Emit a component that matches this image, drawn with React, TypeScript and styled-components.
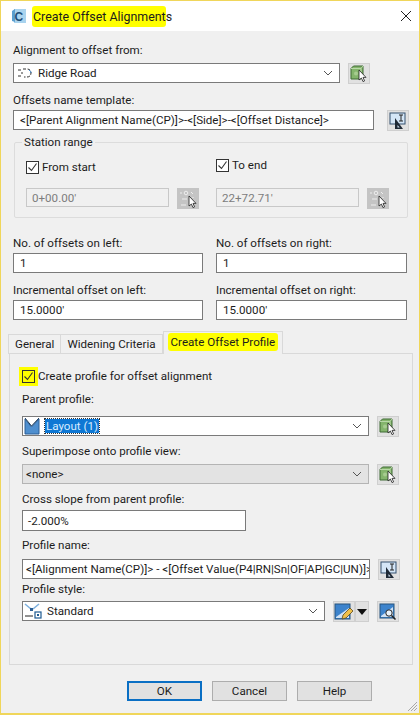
import styled, { createGlobalStyle } from 'styled-components';

const GlobalStyle = createGlobalStyle`
  html, body {
    margin: 0;
    padding: 0;
    background: #f0f0f0;
  }
  * {
    box-sizing: border-box;
  }
`;

const Window = styled.div`
  width: 420px;
  height: 715px;
  display: flex;
  flex-direction: column;
  position: relative;
  background: #f0f0f0;
  border: 1px solid #f0d65a;
  border-bottom-width: 2px;
  font-family: 'Roboto', 'Noto Sans', sans-serif;
  font-size: 11.6px;
  color: #1c1c1c;
  overflow: hidden;
`;

const TitleBar = styled.div`
  height: 30px;
  flex: none;
  background: #fff;
  display: flex;
  align-items: center;
  padding: 0 0 0 11px;
  gap: 6px;
  font-size: 12.4px;
`;

const TitleText = styled.span`
  background: #ffff00;
  padding: 3px 1px;
  border-radius: 3px;
  width: 134px;
  white-space: nowrap;
`;

const CloseButton = styled.div`
  margin-left: auto;
  margin-right: 7px;
  width: 12px;
  height: 12px;
  display: flex;
`;

const Body = styled.div`
  flex: 1;
  padding: 12px 11px 0 12px;
  display: flex;
  flex-direction: column;
`;

const Label = styled.div<{ $top?: number }>`
  height: 15px;
  line-height: 15px;
  margin-top: ${(p) => p.$top ?? 0}px;
  white-space: nowrap;
`;

const Row = styled.div<{ $top?: number; $gap?: number }>`
  display: flex;
  align-items: flex-start;
  gap: ${(p) => p.$gap ?? 8}px;
  margin-top: ${(p) => p.$top ?? 0}px;
`;

const Box = styled.div<{ $width: number; $height?: number; $disabled?: boolean; $muted?: boolean; $pad?: number }>`
  width: ${(p) => p.$width}px;
  height: ${(p) => p.$height ?? 20}px;
  flex: none;
  display: flex;
  align-items: center;
  gap: 5px;
  padding: 0 3px 0 ${(p) => p.$pad ?? 5}px;
  white-space: nowrap;
  overflow: hidden;
  background: ${(p) => (p.$muted ? '#f0f0f0' : p.$disabled ? '#e3e3e3' : '#fff')};
  border: 1px solid ${(p) => (p.$muted ? '#c8c8c8' : p.$disabled ? '#b4b4b4' : '#7a7a7a')};
  color: ${(p) => (p.$muted ? '#7d7d7d' : '#1c1c1c')};
`;

const BoxText = styled.span`
  flex: 1;
`;

const SelectedText = styled.span`
  background: #0f78d4;
  color: #d8ecff;
  outline: 1px dotted #333;
  padding: 0 1px;
  line-height: 14px;
`;

const IconButton = styled.div<{ $width?: number; $disabled?: boolean }>`
  width: ${(p) => p.$width ?? 22}px;
  height: 21px;
  flex: none;
  display: flex;
  align-items: center;
  justify-content: center;
  background: ${(p) => (p.$disabled ? '#c4c4c4' : '#e1e1e1')};
  border: 1px solid ${(p) => (p.$disabled ? '#c4c4c4' : '#cfcfcf')};
`;

const Group = styled.fieldset`
  margin: 5px 0 0 1px;
  padding: 0;
  width: 394px;
  height: 82px;
  border: 1px solid #dcdcdc;
  border-radius: 2px;
  position: relative;
  display: flex;
`;

const Legend = styled.legend`
  margin-left: 7px;
  padding: 0 2px;
  line-height: 13px;
`;

const GroupColumn = styled.div<{ $top: number }>`
  width: 190px;
  padding: ${(p) => p.$top}px 0 0 11px;
`;

const CheckRow = styled.div`
  display: flex;
  align-items: center;
  gap: 3px;
  height: 14px;
`;

const CheckBox = styled.div<{ $marked?: boolean }>`
  width: 13px;
  height: 13px;
  flex: none;
  background: ${(p) => (p.$marked ? '#ffff00' : '#fff')};
  border: 1px solid #333;
  box-shadow: ${(p) => (p.$marked ? '0 0 0 3px #ffff00' : 'none')};
  display: flex;
`;

const FieldColumn = styled.div`
  flex: none;
  width: 203px;
`;

const FieldBox = styled(Box)`
  margin-top: 2px;
`;

const Tabs = styled.div`
  display: flex;
  align-items: flex-end;
  margin: 11px 0 0 -4px;
  height: 23px;
  position: relative;
  z-index: 1;
`;

const Tab = styled.div<{ $active?: boolean }>`
  height: ${(p) => (p.$active ? 23 : 20)}px;
  display: flex;
  align-items: center;
  padding: 0 ${(p) => (p.$active ? 7 : 6)}px;
  background: #f0f0f0;
  border: 1px solid #d9d9d9;
  border-bottom: ${(p) => (p.$active ? 'none' : '1px solid #d9d9d9')};
  margin-left: ${(p) => (p.$active ? 0 : -1)}px;
`;

const TabMark = styled.span`
  background: #ffff00;
  padding: 2px 3px;
  margin: -2px -3px 0;
  border-radius: 3px;
  white-space: nowrap;
`;

const Panel = styled.div`
  margin: -1px 0 0 -4px;
  width: 404px;
  height: 312px;
  border: 1px solid #d9d9d9;
  padding: 15px 0 0 12px;
  display: flex;
  flex-direction: column;
`;

const Footer = styled.div`
  display: flex;
  gap: 10px;
  margin: 16px 0 0 114px;
`;

const DialogButton = styled.div<{ $primary?: boolean }>`
  width: 75px;
  height: 20px;
  display: flex;
  align-items: center;
  justify-content: center;
  background: #e1e1e1;
  border: ${(p) => (p.$primary ? '2px solid #0a6fc4' : '1px solid #adadad')};
`;

const Grip = styled.div`
  position: absolute;
  right: 1px;
  bottom: 1px;
  width: 11px;
  height: 11px;
  display: flex;
`;

const Chevron = () => (
  <svg width="10" height="6" viewBox="0 0 10 6" style={{ flex: 'none', marginRight: 3 }}>
    <path d="M1 1l4 4 4-4" fill="none" stroke="#555" strokeWidth="1" />
  </svg>
);

const Arrow = ({ x, y }: { x: number; y: number }) => (
  <path
    transform={`translate(${x} ${y})`}
    d="M0 0v10l2.4-2 1.6 3.6 1.6-.7-1.6-3.5h3z"
    fill="#fff"
    stroke="#222"
    strokeWidth=".8"
  />
);

const PickFromDrawingIcon = () => (
  <svg width="18" height="18" viewBox="0 0 18 18">
    <path d="M1 3.5L3.5 1H13v10.5L11 14H1z" fill="#84b56c" stroke="#3f6b34" />
    <path d="M1 3.5h10V14M11 3.5L13 1" fill="none" stroke="#b9d8a8" />
    <circle cx="6" cy="8.5" r="2" fill="#a6cc8f" />
    <Arrow x={9} y={5} />
  </svg>
);

const TemplateIcon = () => (
  <svg width="18" height="18" viewBox="0 0 18 18">
    <rect x="1" y="1" width="15" height="11" fill="#d4e6f7" stroke="#34506e" />
    <path d="M10 3h4M12 3v6M10 9h4" stroke="#222" fill="none" />
    <path d="M6 6l8 11H6z" fill="#1f2a36" />
    <path d="M8.5 13l2.2 2.4H8.5z" fill="#d4e6f7" />
  </svg>
);

const StationIcon = () => (
  <svg width="18" height="18" viewBox="0 0 18 18">
    <circle cx="7" cy="3" r="1.8" fill="none" stroke="#eee" />
    <path d="M12 2l2 2M1 3h2M3 9h5M14 7v1" stroke="#eee" fill="none" />
    <path d="M2 15h5" stroke="#eee" />
    <Arrow x={10} y={6} />
  </svg>
);

const AlignmentIcon = () => (
  <svg width="16" height="12" viewBox="0 0 16 12" style={{ flex: 'none' }}>
    <path
      d="M1 3h3M6 2h4c3 0 4 2 4 4s-1 4-4 4H7M1 9h3M4 6h2"
      fill="none"
      stroke="#333"
      strokeDasharray="3 1.5"
    />
    <path d="M12 3c1.5 1 2 2 2 3" stroke="#2b7cc7" fill="none" />
  </svg>
);

const LayoutProfileIcon = () => (
  <svg width="16" height="18" viewBox="0 0 16 18" style={{ flex: 'none' }}>
    <path d="M1 2l6.5 8L15 2v15H1z" fill="#4f8fcf" stroke="#2c5f96" />
    <path d="M1 1l6.5 8L15 1" fill="none" stroke="#1f3d5c" />
  </svg>
);

const StyleIcon = () => (
  <svg width="18" height="16" viewBox="0 0 18 16" style={{ flex: 'none' }}>
    <path d="M1 1l6 5M15 1L9 6" stroke="#7fb1de" strokeWidth="1.6" fill="none" />
    <rect x="6" y="5" width="3" height="3" fill="#2c5f96" />
    <path d="M1 13h8" stroke="#222" />
    <rect x="11" y="9" width="6" height="6" fill="#fff" stroke="#1f5b92" strokeWidth="1.2" />
    <rect x="13" y="11" width="2" height="2" fill="#1f5b92" />
  </svg>
);

const EditStyleIcon = () => (
  <svg width="20" height="18" viewBox="0 0 20 18">
    <rect x="1" y="1" width="15" height="15" fill="#3c83cc" stroke="#27557f" />
    <path d="M2 14l13-9v10H2z" fill="#cfe2f5" />
    <path d="M8 16l1-4 7-7 3 3-7 7z" fill="#efc04a" stroke="#5c4a20" strokeWidth=".8" />
  </svg>
);

const BrowseStyleIcon = () => (
  <svg width="18" height="18" viewBox="0 0 18 18">
    <rect x="1" y="1" width="14" height="14" fill="#3c83cc" stroke="#27557f" />
    <path d="M2 13l12-9v10H2z" fill="#cfe2f5" />
    <circle cx="10" cy="10" r="3.2" fill="#e8f2fb" stroke="#222" />
    <path d="M12.5 12.5l4 4" stroke="#222" strokeWidth="1.6" />
  </svg>
);

const CheckMark = () => (
  <svg width="11" height="11" viewBox="0 0 11 11">
    <path d="M1.5 5.5l3 3 5-7" fill="none" stroke="#333" strokeWidth="1.1" />
  </svg>
);

// the "C" of the title bar is the app's logo letter, kept as real text
const AppLogo = () => (
  <svg width="14" height="16" viewBox="0 0 14 16">
    <path d="M2 1h12v14H2z" fill="#a9d3ee" />
    <path d="M0 3l3-2v13l-3-1z" fill="#5a9fd0" />
    <text x="2.5" y="12.5" fontFamily="Liberation Sans" fontSize="12" fontWeight="700" fill="#1f4f78">
      C
    </text>
  </svg>
);

export default function App() {
  return (
    <>
      <GlobalStyle />
      <Window>
        <TitleBar>
          <AppLogo />
          <TitleText>Create Offset Alignments</TitleText>
          <CloseButton>
            <svg width="12" height="12" viewBox="0 0 12 12">
              <path d="M1 1l10 10M11 1L1 11" stroke="#222" />
            </svg>
          </CloseButton>
        </TitleBar>
        <Body>
          <Label>Alignment to offset from:</Label>
          <Row $top={5}>
            <Box $width={327} $pad={3}>
              <AlignmentIcon />
              <BoxText>Ridge Road</BoxText>
              <Chevron />
            </Box>
            <IconButton>
              <PickFromDrawingIcon />
            </IconButton>
          </Row>
          <Label $top={9}>Offsets name template:</Label>
          <Row $top={2} $gap={13}>
            <Box $width={361} $pad={6}>
              <BoxText>&lt;[Parent Alignment Name(CP)]&gt;-&lt;[Side]&gt;-&lt;[Offset Distance]&gt;</BoxText>
            </Box>
            <IconButton>
              <TemplateIcon />
            </IconButton>
          </Row>
          <Group>
            <Legend>Station range</Legend>
            <GroupColumn $top={11}>
              <CheckRow>
                <CheckBox>
                  <CheckMark />
                </CheckBox>
                From start
              </CheckRow>
              <Row $top={14}>
                <Box $width={143} $height={19} $muted>
                  0+00.00'
                </Box>
                <IconButton $disabled>
                  <StationIcon />
                </IconButton>
              </Row>
            </GroupColumn>
            <GroupColumn $top={9}>
              <CheckRow>
                <CheckBox>
                  <CheckMark />
                </CheckBox>
                To end
              </CheckRow>
              <Row $top={16}>
                <Box $width={143} $height={19} $muted>
                  22+72.71'
                </Box>
                <IconButton $disabled>
                  <StationIcon />
                </IconButton>
              </Row>
            </GroupColumn>
          </Group>
          <Row $top={18} $gap={0}>
            <FieldColumn>
              <Label>No. of offsets on left:</Label>
              <FieldBox $width={190} $pad={6}>
                1
              </FieldBox>
            </FieldColumn>
            <FieldColumn>
              <Label>No. of offsets on right:</Label>
              <FieldBox $width={191} $pad={6}>
                1
              </FieldBox>
            </FieldColumn>
          </Row>
          <Row $top={10} $gap={0}>
            <FieldColumn>
              <Label>Incremental offset on left:</Label>
              <FieldBox $width={190} $pad={6}>
                15.0000'
              </FieldBox>
            </FieldColumn>
            <FieldColumn>
              <Label>Incremental offset on right:</Label>
              <FieldBox $width={191} $pad={6}>
                15.0000'
              </FieldBox>
            </FieldColumn>
          </Row>
          <Tabs>
            <Tab>General</Tab>
            <Tab>Widening Criteria</Tab>
            <Tab $active>
              <TabMark>Create Offset Profile</TabMark>
            </Tab>
          </Tabs>
          <Panel>
            <CheckRow>
              <CheckBox $marked>
                <CheckMark />
              </CheckBox>
              Create profile for offset alignment
            </CheckRow>
            <Label $top={9}>Parent profile:</Label>
            <Row $top={9}>
              <Box $width={347} $pad={1}>
                <LayoutProfileIcon />
                <BoxText>
                  <SelectedText>Layout (1)</SelectedText>
                </BoxText>
                <Chevron />
              </Box>
              <IconButton>
                <PickFromDrawingIcon />
              </IconButton>
            </Row>
            <Label $top={7}>Superimpose onto profile view:</Label>
            <Row $top={5}>
              <Box $width={347} $disabled $pad={3}>
                <BoxText>&lt;none&gt;</BoxText>
                <Chevron />
              </Box>
              <IconButton>
                <PickFromDrawingIcon />
              </IconButton>
            </Row>
            <Label $top={7}>Cross slope from parent profile:</Label>
            <Row $top={3}>
              <Box $width={224} $height={21}>
                -2.000%
              </Box>
            </Row>
            <Label $top={7}>Profile name:</Label>
            <Row $top={6}>
              <Box $width={348} $pad={3}>
                <BoxText>&lt;[Alignment Name(CP)]&gt; - &lt;[Offset Value(P4|RN|Sn|OF|AP|GC|UN)]&gt;</BoxText>
              </Box>
              <IconButton>
                <TemplateIcon />
              </IconButton>
            </Row>
            <Label $top={2}>Profile style:</Label>
            <Row $top={4}>
              <Box $width={303} $pad={1}>
                <StyleIcon />
                <BoxText>Standard</BoxText>
                <Chevron />
              </Box>
              <Row $gap={0}>
                <IconButton>
                  <EditStyleIcon />
                </IconButton>
                <IconButton $width={14}>
                  <svg width="10" height="6" viewBox="0 0 10 6">
                    <path d="M0 0h10L5 6z" fill="#111" />
                  </svg>
                </IconButton>
              </Row>
              <IconButton>
                <BrowseStyleIcon />
              </IconButton>
            </Row>
          </Panel>
          <Footer>
            <DialogButton $primary>OK</DialogButton>
            <DialogButton>Cancel</DialogButton>
            <DialogButton>Help</DialogButton>
          </Footer>
        </Body>
        <Grip>
          <svg width="11" height="11" viewBox="0 0 11 11">
            <path d="M10 1L1 10M10 4l-6 6M10 7l-3 3" stroke="#a8a8a8" />
          </svg>
        </Grip>
      </Window>
    </>
  );
}
